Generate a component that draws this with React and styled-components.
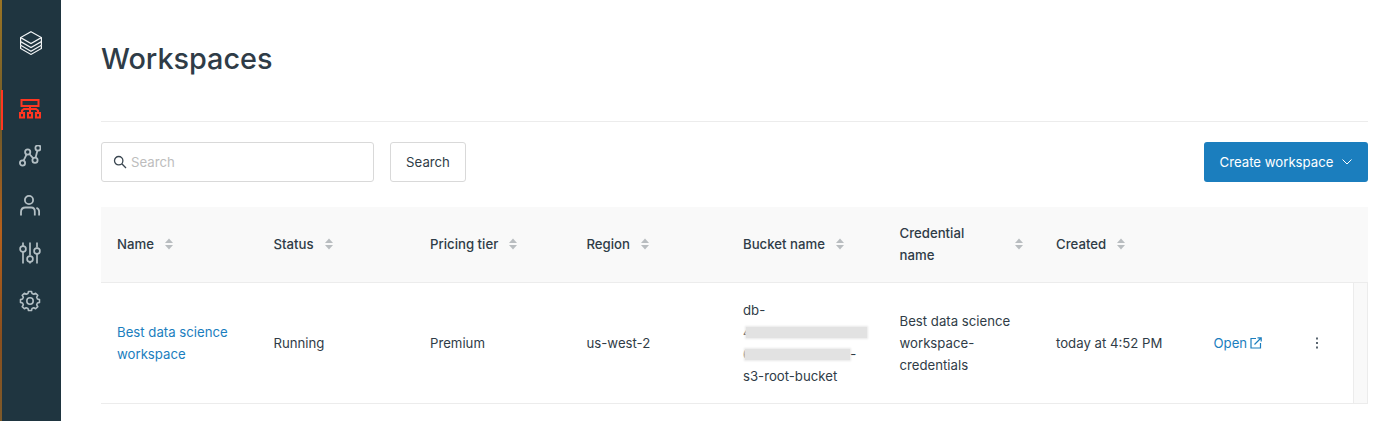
import React from 'react';
import styled, { createGlobalStyle } from 'styled-components';

const GlobalStyle = createGlobalStyle`
  html, body {
    margin: 0;
    height: 100%;
    overflow: hidden;
    background: #fff;
    font-family: Inter, "Liberation Sans", sans-serif;
  }
`;

const colors = {
  nav: '#1f3540',
  navIcon: '#b3bfc4',
  red: '#ff3621',
  blue: '#1b7ebe',
  text: '#2f3c47',
  border: '#ececec',
  headBg: '#f9f9f9',
};

const Page = styled.div`
  display: flex;
  width: 1390px;
  height: 421px;
  overflow: hidden;
`;

const EdgeStrip = styled.div`
  width: 2px;
  background: linear-gradient(180deg, #9a7424 0%, #6f5a2a 30%, #b5601c 55%, #8a4f1e 80%, #7d5a2a 100%);
`;

const Sidebar = styled.nav`
  width: 59px;
  background: ${colors.nav};
  display: flex;
  flex-direction: column;
  align-items: flex-start;
  padding-top: 31px;
  box-sizing: border-box;
`;

const Logo = styled.div`
  height: 59px;
  display: flex;
  justify-content: center;
  width: 58px;
`;

const NavItem = styled.div`
  position: relative;
  width: 60px;
  height: ${(p) => p.$h || 45}px;
  padding-bottom: ${(p) => (p.$active ? 2 : 0)}px;
  box-sizing: border-box;
  display: flex;
  align-items: center;
  justify-content: center;
  margin-left: -2px;
  color: ${(p) => (p.$active ? colors.red : colors.navIcon)};

  ${(p) =>
    p.$active &&
    `&:before {
      content: '';
      position: absolute;
      left: 1px;
      top: 0;
      width: 2px;
      height: 40px;
      background: ${colors.red};
    }`}
`;

const Main = styled.main`
  flex: 1;
  padding: 0 22px 0 40px;
  min-width: 0;
`;

const Title = styled.h1`
  margin: 0;
  height: 122px;
  box-sizing: border-box;
  padding-top: 41px;
  font-size: 28.8px;
  line-height: 36px;
  font-weight: 500;
  color: ${colors.text};
  border-bottom: 1px solid ${colors.border};
`;

const Toolbar = styled.div`
  display: flex;
  align-items: center;
  margin-top: 20px;
  height: 40px;
`;

const SearchBox = styled.div`
  width: 273px;
  height: 40px;
  box-sizing: border-box;
  display: flex;
  align-items: center;
  gap: 4px;
  padding-left: 11px;
  border: 1px solid #d9d9d9;
  border-radius: 3px;
  color: #bdbdbd;
  font-size: 13.2px;
`;

const SearchButton = styled.button`
  margin-left: 16px;
  width: 76px;
  height: 40px;
  background: #fff;
  border: 1px solid #d9d9d9;
  border-radius: 3px;
  color: ${colors.text};
  font: 400 13.2px Inter, "Liberation Sans", sans-serif;
`;

const CreateButton = styled.button`
  margin-left: auto;
  width: 164px;
  height: 40px;
  display: flex;
  align-items: center;
  justify-content: center;
  gap: 9px;
  background: ${colors.blue};
  border: 0;
  border-radius: 3px;
  color: #fff;
  font: 400 13.2px Inter, "Liberation Sans", sans-serif;
`;

const gridCols = 'repeat(7, 156.5px) 1fr';

const HeadRow = styled.div`
  display: grid;
  grid-template-columns: ${gridCols};
  align-items: center;
  margin-top: 25px;
  height: 75px;
  padding-bottom: 2px;
  box-sizing: border-box;
  background: ${colors.headBg};
`;

const HeadCell = styled.div`
  display: flex;
  align-items: center;
  padding-left: 16px;
  font-size: 13.2px;
  line-height: 22px;
  font-weight: 500;
  color: ${colors.text};
`;

const CredentialHead = styled.span`
  width: 100px;
`;

const SortIcon = styled.svg`
  margin-left: ${(p) => p.$gap}px;
  flex: none;
`;

const BodyWrap = styled.div`
  display: flex;
  height: 122px;
  border-top: 1px solid ${colors.border};
  border-bottom: 1px solid ${colors.border};
  box-sizing: border-box;
`;

const BodyRow = styled.div`
  flex: 1;
  display: grid;
  grid-template-columns: ${gridCols};
  align-items: center;
`;

const ScrollStrip = styled.div`
  width: 15px;
  background: ${colors.headBg};
  border-left: 1px solid ${colors.border};
  border-right: 1px solid ${colors.border};
  box-sizing: border-box;
`;

const Cell = styled.div`
  padding-left: 16px;
  font-size: 13.2px;
  line-height: 22px;
  color: ${colors.text};
`;

const NameLink = styled.a`
  display: block;
  width: 125px;
  color: ${colors.blue};
`;

const Redacted = styled.span`
  display: inline-block;
  width: ${(p) => p.$w}px;
  height: 11px;
  margin-left: -6px;
  vertical-align: -1px;
  background: #e2e2e2;
  box-shadow: 0 0 2px 1px #e8e8e8;
`;

const ActionsCell = styled.div`
  display: flex;
  align-items: center;
  padding-left: 17px;
  font-size: 13.2px;
  color: ${colors.blue};
`;

const OpenIcon = styled.svg`
  margin-left: 3px;
`;

const Kebab = styled.svg`
  margin-left: 53px;
  color: #5a6670;
`;

const Sort = ({ gap = 10 }) => (
  <SortIcon $gap={gap} width="10" height="12" viewBox="0 0 10 12" fill="#b9bdc0">
    <path d="M5 0.5 9 5H1z" />
    <path d="M1 7h8l-4 4.5z" />
  </SortIcon>
);

const Head = ({ children, gap }) => (
  <HeadCell>
    {children}
    <Sort gap={gap} />
  </HeadCell>
);

const LayersIcon = () => (
  <svg width="22" height="24" viewBox="0 0 22 24" fill="none" stroke="#f2f5f6" strokeWidth="1.2">
    <path d="M11 .7 21.4 6.6 11 12.6 .6 6.6z" />
    <path d="M.6 7v3.6L11 16.6l10.4-6V7" />
    <path d="M.6 10.8v3.4L11 20.2l10.4-6v-3.4" />
    <path d="M.6 14.4v3L11 23.4l10.4-6v-3" />
  </svg>
);

const HierarchyIcon = () => (
  <svg width="22" height="20" viewBox="0 0 22 20" fill="none" stroke="currentColor" strokeWidth="2">
    <rect x="2.5" y="1" width="17" height="6" />
    <path d="M11 7v6M3 14v-2.5L5 10h12l2 1.5V14" />
    <rect x="1" y="14" width="4" height="4.5" />
    <rect x="9" y="14" width="4" height="4.5" />
    <rect x="17" y="14" width="4" height="4.5" />
  </svg>
);

const GraphIcon = () => (
  <svg width="22" height="22" viewBox="0 0 22 22" fill="none" stroke="currentColor" strokeWidth="1.8">
    <circle cx="3.5" cy="18" r="2.6" />
    <circle cx="8.7" cy="7" r="2.6" />
    <circle cx="16" cy="15.3" r="2.6" />
    <circle cx="19" cy="3" r="2.6" />
    <path d="M4.6 15.6 7.6 9.4M10.4 9 14.3 13.3M16.6 12.8 18.4 5.5" />
  </svg>
);

const UserIcon = () => (
  <svg width="20" height="21" viewBox="0 0 20 21" fill="none" stroke="currentColor" strokeWidth="1.8">
    <circle cx="9" cy="5" r="4.1" />
    <path d="M1 20.5V17c0-2.8 1.8-4.5 4.6-4.5h5.6c2.4 0 3.6 1.6 3.6 4v4" />
    <path d="M16.4 12.8c1.7.6 2.7 2 2.7 3.8v3.9" />
  </svg>
);

const SlidersIcon = () => (
  <svg width="22" height="22" viewBox="0 0 22 22" fill="none" stroke="currentColor" strokeWidth="1.7">
    <path d="M4 .5v3.5M4 10v11.5M11 .5v13M11 20v1.5M18 .5v5M18 12v9.5" />
    <circle cx="4" cy="7" r="2.9" />
    <circle cx="11" cy="17" r="2.9" />
    <circle cx="18" cy="9" r="2.9" />
  </svg>
);

// 8 tooth gear outline, easier to compute than to write out by hand
const gearPath = () => {
  const pts = [];
  for (let i = 0; i < 8; i++) {
    const a = (i * Math.PI) / 4;
    [[-0.27, 7.7], [-0.16, 9.6], [0.16, 9.6], [0.27, 7.7]].forEach(([d, r]) => {
      pts.push(`${(11 + r * Math.sin(a + d)).toFixed(2)} ${(11 - r * Math.cos(a + d)).toFixed(2)}`);
    });
  }
  return `M${pts.join('L')}z`;
};

const GearIcon = () => (
  <svg width="22" height="22" viewBox="0 0 22 22" fill="none" stroke="currentColor" strokeWidth="1.6" strokeLinejoin="round">
    <path d={gearPath()} />
    <circle cx="11" cy="11" r="3.2" />
  </svg>
);

const SearchIcon = () => (
  <svg width="14" height="14" viewBox="0 0 14 14" fill="none" stroke="#3a4650" strokeWidth="1.3">
    <circle cx="5.7" cy="5.7" r="4.2" />
    <path d="M8.8 8.8 13 13" />
  </svg>
);

const App = () => {
  return (
    <Page>
      <GlobalStyle />
      <EdgeStrip />
      <Sidebar>
        <Logo>
          <LayersIcon />
        </Logo>
        <NavItem $active $h={40}>
          <HierarchyIcon />
        </NavItem>
        <NavItem $h={52}>
          <GraphIcon />
        </NavItem>
        <NavItem $h={47}>
          <UserIcon />
        </NavItem>
        <NavItem $h={48}>
          <SlidersIcon />
        </NavItem>
        <NavItem $h={48}>
          <GearIcon />
        </NavItem>
      </Sidebar>
      <Main>
        <Title>Workspaces</Title>
        <Toolbar>
          <SearchBox>
            <SearchIcon />
            Search
          </SearchBox>
          <SearchButton>Search</SearchButton>
          <CreateButton>
            Create workspace
            <svg width="10" height="6" viewBox="0 0 10 6" fill="none" stroke="#fff" strokeWidth="1">
              <path d="M0.5 0.5 5 5 9.5 0.5" />
            </svg>
          </CreateButton>
        </Toolbar>
        <HeadRow>
          <Head>Name</Head>
          <Head>Status</Head>
          <Head>Pricing tier</Head>
          <Head>Region</Head>
          <Head>Bucket name</Head>
          <Head gap={14}>
            <CredentialHead>Credential name</CredentialHead>
          </Head>
          <Head>Created</Head>
        </HeadRow>
        <BodyWrap>
          <BodyRow>
            <Cell>
              <NameLink>Best data science workspace</NameLink>
            </Cell>
            <Cell>Running</Cell>
            <Cell>Premium</Cell>
            <Cell>us-west-2</Cell>
            <Cell>
              db-
              <br />
              4<Redacted $w={121} />
              <br />6<Redacted $w={105} />-
              <br />
              s3-root-bucket
            </Cell>
            <Cell>
              Best data science
              <br />
              workspace-
              <br />
              credentials
            </Cell>
            <Cell>today at 4:52 PM</Cell>
            <ActionsCell>
              Open
              <OpenIcon width="12" height="12" viewBox="0 0 12 12" fill="none" stroke="currentColor" strokeWidth="1.2">
                <path d="M6 1.5H1v9.5h9.5V6" />
                <path d="M4.5 7.5 11 1M7.5 .8h3.7v3.7" />
              </OpenIcon>
              <Kebab width="4" height="14" viewBox="0 0 4 14" fill="currentColor">
                <rect x="1" y="1.5" width="2" height="2" />
                <rect x="1" y="6" width="2" height="2" />
                <rect x="1" y="10.5" width="2" height="2" />
              </Kebab>
            </ActionsCell>
          </BodyRow>
          <ScrollStrip />
        </BodyWrap>
      </Main>
    </Page>
  );
};

export default App;
